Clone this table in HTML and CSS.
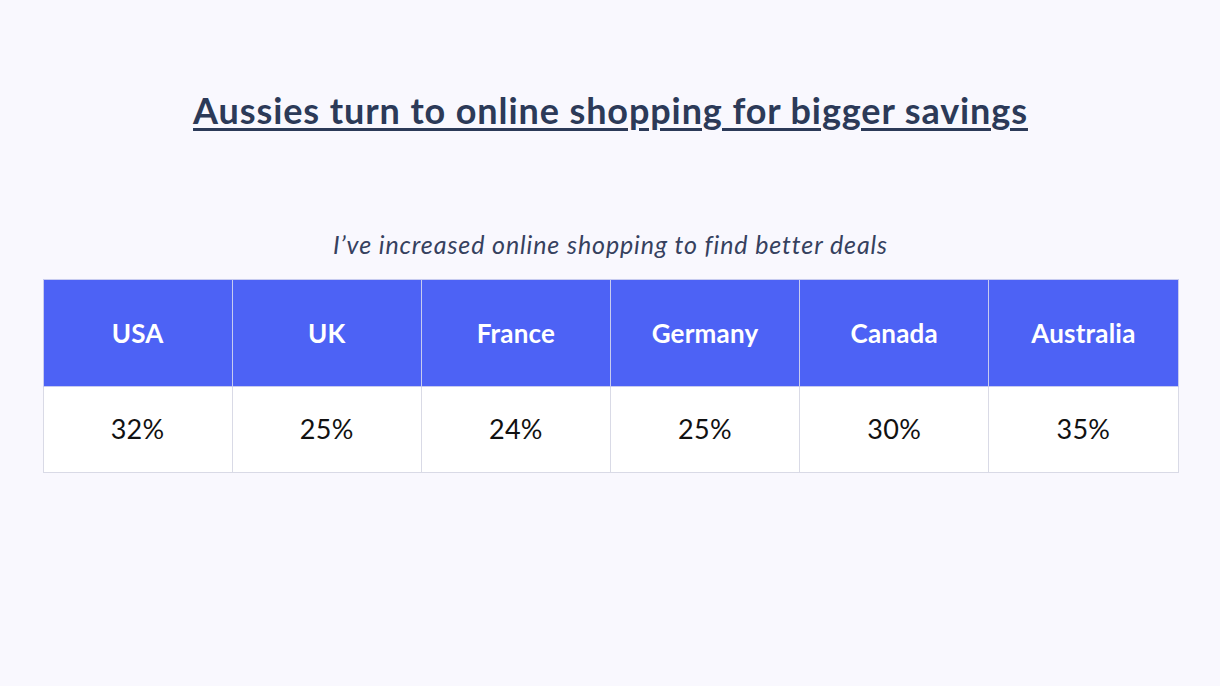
FILE: index.html
```html
<!DOCTYPE html>
<html lang="en">
<head>
<meta charset="utf-8">
<title>Aussies turn to online shopping</title>
<link rel="stylesheet" href="styles.css">
</head>
<body>
<main class="page">
  <h1 class="title">Aussies turn to online shopping for bigger savings</h1>
  <p class="caption">I’ve increased online shopping to find better deals</p>
  <table class="data">
    <thead>
      <tr>
        <th>USA</th><th>UK</th><th>France</th><th>Germany</th><th>Canada</th><th>Australia</th>
      </tr>
    </thead>
    <tbody>
      <tr>
        <td>32%</td><td>25%</td><td>24%</td><td>25%</td><td>30%</td><td>35%</td>
      </tr>
    </tbody>
  </table>
</main>
</body>
</html>
```

FILE: styles.css
```css
html, body {
  margin: 0;
  padding: 0;
  background: #f9f8fe;
}
body {
  font-family: Lato, "Open Sans", sans-serif;
  width: 1220px;
  height: 686px;
  overflow: hidden;
}
.page {
  display: flex;
  flex-direction: column;
  align-items: center;
  padding: 89px 42px 0 43px;
}
.title {
  margin: 0;
  font-size: 36px;
  font-weight: 700;
  letter-spacing: 0.9px;
  color: #2c3a58;
  text-decoration: underline;
  text-decoration-thickness: 3px;
  text-underline-offset: 4px;
  line-height: 42px;
}
.caption {
  margin: 98px 0 0;
  font-style: italic;
  font-size: 25px;
  letter-spacing: 0.9px;
  color: #36415e;
  line-height: 30px;
}
.data {
  margin-top: 20px;
  width: 1136px;
  border-collapse: collapse;
  table-layout: fixed;
}
.data th, .data td {
  border: 1px solid #d9dae6;
  text-align: center;
}
.data th {
  background: #4d62f5;
  color: #ffffff;
  font-weight: 700;
  font-size: 26px;
  letter-spacing: 0.2px;
  height: 106px;
  padding: 0;
  border-color: #c7cbf0;
}
.data td {
  background: #ffffff;
  color: #111111;
  font-size: 27px;
  letter-spacing: 0.3px;
  height: 83px;
  padding: 0 0 2px;
}
```
